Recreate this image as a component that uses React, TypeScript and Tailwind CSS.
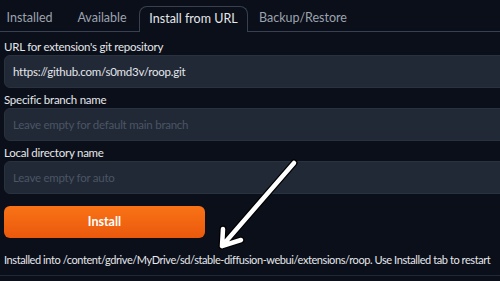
import React from 'react';

const tabs = [
  { name: 'Installed', cls: 'ml-[-6px] w-[71px]' },
  { name: 'Available', cls: 'w-[74px]' },
  { name: 'Install from URL', cls: 'w-[109px]' },
  { name: 'Backup/Restore', cls: 'w-[110px]' },
];

function Field({ label, value, placeholder }: { label: string; value?: string; placeholder?: string }) {
  return (
    <div className="flex flex-col">
      <label className="text-[11.5px] leading-[14px] tracking-[-0.25px] text-[#e5e7eb] mb-[1px]">{label}</label>
      <div className="h-[33px] w-[510px] rounded-[6px] bg-[#212937] border border-[#29323f] flex items-center px-[8px] text-[11.5px] tracking-[-0.25px]">
        {value ? (
          <span className="text-[#e5e7eb]">{value}</span>
        ) : (
          <span className="text-[#4b5563]">{placeholder}</span>
        )}
      </div>
    </div>
  );
}

export default function App() {
  return (
    <div
      className="relative w-[500px] h-[281px] overflow-hidden bg-[#0b0f19]"
      style={{ fontFamily: 'Lato, "Noto Sans", sans-serif' }}
    >
      <div className="flex items-end h-[32px] border-b border-[#374151]">
        {tabs.map((t, i) => (
          <div
            key={t.name}
            className={
              i === 2
                ? `${t.cls} h-[26px] -mb-px flex items-center justify-center text-[12.5px] text-[#e5e7eb] bg-[#0b0f19] border border-b-0 border-[#374151] rounded-t-[8px]`
                : `${t.cls} h-[25px] flex items-center justify-center text-[12.5px] text-[#9ca3af]`
            }
          >
            {t.name}
          </div>
        ))}
      </div>

      <div className="flex flex-col gap-[5px] pl-[4px] pt-[8px]">
        <Field label="URL for extension's git repository" value="https://github.com/s0md3v/roop.git" />
        <Field label="Specific branch name" placeholder="Leave empty for default main branch" />
        <Field label="Local directory name" placeholder="Leave empty for auto" />
      </div>

      <button className="block ml-[4px] mt-[12px] w-[201px] h-[32px] rounded-[6px] bg-gradient-to-b from-[#f97316] to-[#ea580c] text-white font-bold text-[12.5px]">
        Install
      </button>

      <div className="pl-[4px] pt-[15px] text-[11px] leading-[14px] tracking-[-0.42px] text-[#e5e7eb] whitespace-nowrap">
        Installed into /content/gdrive/MyDrive/sd/stable-diffusion-webui/extensions/roop. Use Installed tab to restart
      </div>
      <div className="mt-[8px] border-t border-[#1f2937]" />

      <svg className="absolute left-0 top-0" width="500" height="281" viewBox="0 0 500 281">
        <g fill="none" strokeLinecap="round" strokeLinejoin="round">
          <path d="M294 163 L222 246 M222 246 L223 229 M222 246 L241 240" stroke="#000" strokeWidth="7" />
          <path d="M294 163 L222 246 M222 246 L223 229 M222 246 L241 240" stroke="#fff" strokeWidth="4.5" />
        </g>
      </svg>
    </div>
  );
}
